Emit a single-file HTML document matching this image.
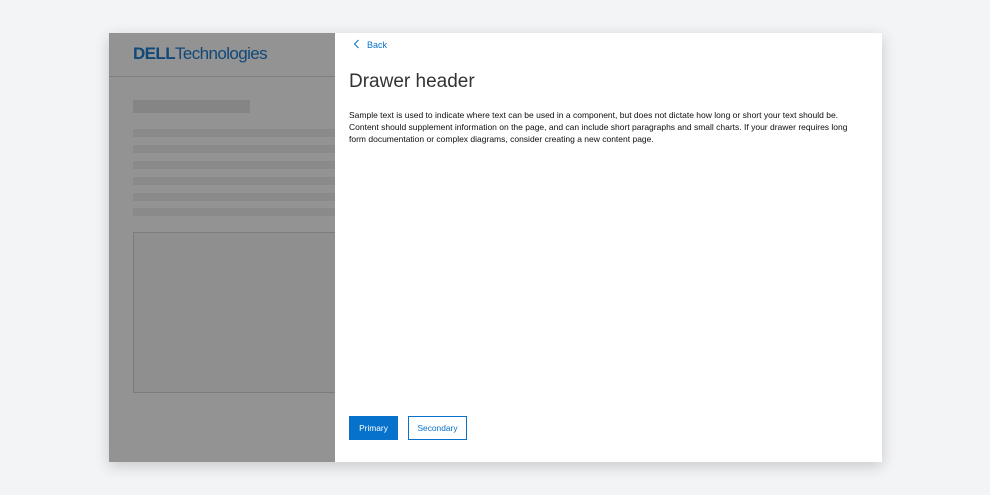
<!DOCTYPE html><html><head><style>
body{margin:0;width:990px;height:495px;background:#f3f4f6;position:relative;overflow:hidden;font-family:"Liberation Sans",Arial,sans-serif}
.frame{position:absolute;left:109px;top:33px;width:773px;height:429px;background:#939393;box-shadow:0 4px 14px rgba(0,0,0,.18);overflow:hidden}
.hdr{position:absolute;left:0;top:0;width:226px;height:43px;border-bottom:1px solid #7f7f7f}
.logo{position:absolute;left:24px;top:11px;font-size:17px;color:#10487a;letter-spacing:-0.6px}
.bar{position:absolute;background:#858585}
.ln{position:absolute;left:24px;width:202px;height:8px;background:#8a8a8a}
.box{position:absolute;left:24px;top:199px;width:202px;height:161px;border:1px solid #7c7c7c;box-sizing:border-box;background:#8f8f8f;border-right:none}
.drawer{position:absolute;left:226px;top:0;width:547px;height:429px;background:#fff}
.back{position:absolute;left:18px;top:6px;font-size:9px;color:#0672cb}
h1{position:absolute;left:14px;top:38px;margin:0;font-weight:normal;font-size:19px;color:#333}
p{position:absolute;left:14px;top:76px;margin:0;width:505px;font-size:8.5px;line-height:12.2px;color:#0e0e0e}
.btn{position:absolute;top:383px;height:24px;box-sizing:border-box;font-size:8.4px;display:flex;align-items:center;justify-content:center}
</style></head><body>
<div class="frame">
<div class="hdr"><div class="logo"><b>DELL</b>Technologies</div></div>
<div class="bar" style="left:24px;top:67px;width:117px;height:13px"></div>
<div class="ln" style="top:96px"></div><div class="ln" style="top:112px"></div><div class="ln" style="top:128px"></div>
<div class="ln" style="top:144px"></div><div class="ln" style="top:160px"></div><div class="ln" style="top:175px"></div>
<div class="box"></div>
<div class="drawer">
<div class="back"><svg width="8" height="10" viewBox="0 0 8 10" style="vertical-align:-1px;margin-right:6px"><path d="M5.5 1L1.5 5l4 4" fill="none" stroke="#0672cb" stroke-width="1"/></svg>Back</div>
<h1>Drawer header</h1>
<p>Sample text is used to indicate where text can be used in a component, but does not dictate how long or short your text should be. Content should supplement information on the page, and can include short paragraphs and small charts. If your drawer requires long form documentation or complex diagrams, consider creating a new content page.</p>
<div class="btn" style="left:14px;width:49px;background:#0672cb;color:#fff">Primary</div>
<div class="btn" style="left:73px;width:59px;border:1px solid #0672cb;color:#0672cb;background:#fff">Secondary</div>
</div></div>
</body></html>
